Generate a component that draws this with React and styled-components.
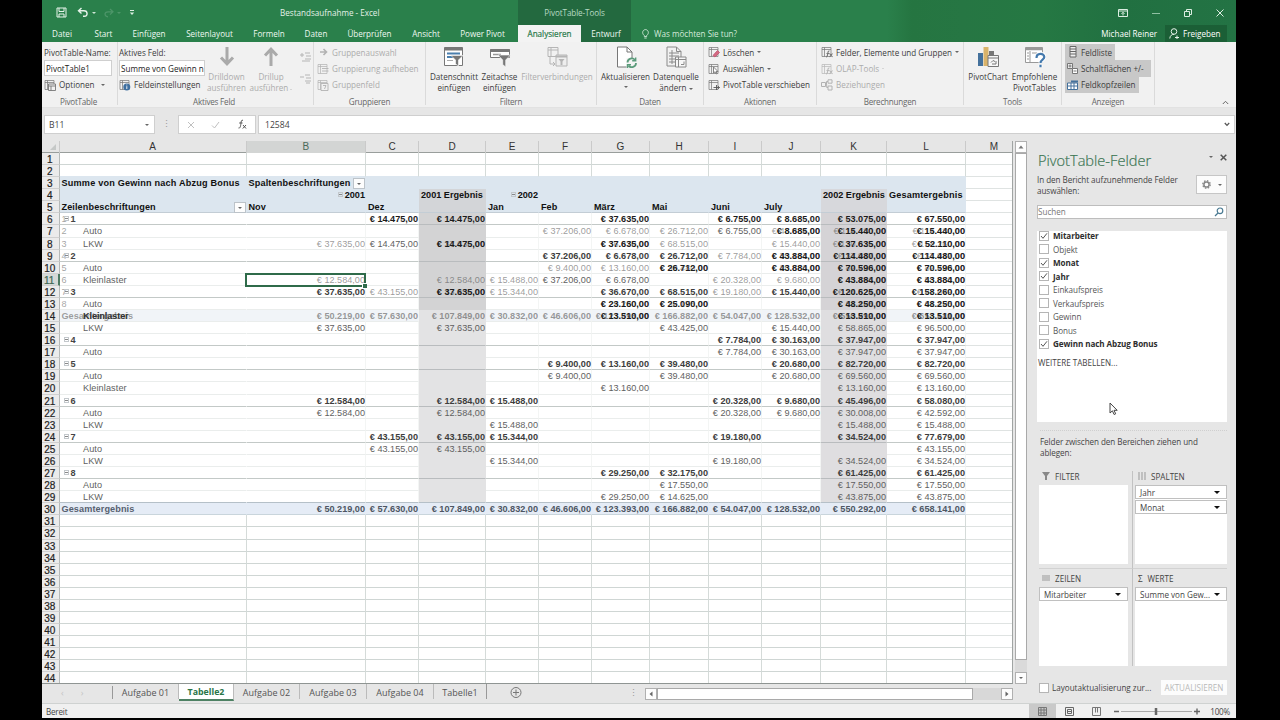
import React from 'react'
import styled, { createGlobalStyle, css } from 'styled-components'

const COLS = ['A', 'B', 'C', 'D', 'E', 'F', 'G', 'H', 'I', 'J', 'K', 'L', 'M']
const ROW_H = 12.09

// pivot after expanding the rows
const expanded = {
  6: 'C14.475 D14.475 G37.635 I6.755 J8.685 K53.075 L67.550',
  7: 'I6.755 J8.685 K15.440 L15.440',
  8: 'C14.475 D14.475 G37.635 K37.635 L52.110',
  9: 'F37.206 G6.678 H26.712 J43.884 K114.480 L114.480',
  10: 'H26.712 J43.884 K70.596 L70.596',
  11: 'F37.206 G6.678 K43.884 L43.884',
  12: 'B37.635 D37.635 G36.670 H68.515 J15.440 K120.625 L158.260',
  13: 'G23.160 H25.090 K48.250 L48.250',
  14: 'G13.510 K13.510 L13.510',
  15: 'B37.635 D37.635 H43.425 J15.440 K58.865 L96.500',
  16: 'I7.784 J30.163 K37.947 L37.947',
  17: 'I7.784 J30.163 K37.947 L37.947',
  18: 'F9.400 G13.160 H39.480 J20.680 K82.720 L82.720',
  19: 'F9.400 H39.480 J20.680 K69.560 L69.560',
  20: 'G13.160 K13.160 L13.160',
  21: 'B12.584 D12.584 E15.488 I20.328 J9.680 K45.496 L58.080',
  22: 'B12.584 D12.584 I20.328 J9.680 K30.008 L42.592',
  23: 'E15.488 K15.488 L15.488',
  24: 'C43.155 D43.155 E15.344 I19.180 K34.524 L77.679',
  25: 'C43.155 D43.155 L43.155',
  26: 'E15.344 I19.180 K34.524 L34.524',
  27: 'G29.250 H32.175 K61.425 L61.425',
  28: 'H17.550 K17.550 L17.550',
  29: 'G29.250 H14.625 K43.875 L43.875',
  30: 'B50.219 C57.630 D107.849 E30.832 F46.606 G123.393 H166.882 I54.047 J128.532 K550.292 L658.141',
}

// collapsed pivot, still fading out underneath
const collapsed = {
  7: 'F37.206 G6.678 H26.712 J43.884 K114.480 L114.480',
  8: 'B37.635 D37.635 G36.670 H68.515 J15.440 K120.625 L158.260',
  9: 'I7.784 J30.163 K37.947 L37.947',
  10: 'F9.400 G13.160 H39.480 J20.680 K82.720 L82.720',
  11: 'B12.584 D12.584 E15.488 I20.328 J9.680 K45.496 L58.080',
  12: 'C43.155 D43.155 E15.344 I19.180 K34.524 L77.679',
  13: 'G29.250 H32.175 K61.425 L61.425',
  14: 'B50.219 C57.630 D107.849 E30.832 F46.606 G123.393 H166.882 I54.047 J128.532 K550.292 L658.141',
}

const labels = {
  7: 'Auto', 8: 'LKW', 10: 'Auto', 11: 'Kleinlaster', 13: 'Auto', 14: 'Kleinlaster', 15: 'LKW',
  17: 'Auto', 19: 'Auto', 20: 'Kleinlaster', 22: 'Auto', 23: 'LKW', 25: 'Auto', 26: 'LKW', 28: 'Auto', 29: 'LKW',
}
const groups = { 6: 1, 9: 2, 12: 3, 16: 4, 18: 5, 21: 6, 24: 7, 27: 8 }
const oldLabels = { 6: '1', 7: '2', 8: '3', 9: '4', 10: '5', 11: '6', 12: '7', 13: '8', 14: 'Gesamtergebnis' }
const months = { B: 'Nov', C: 'Dez', E: 'Jan', F: 'Feb', G: 'März', H: 'Mai', I: 'Juni', J: 'July' }

const lookup = (table, row, col) => {
  const hit = (table[row] || '').split(' ').find((v) => v[0] === col)
  return hit ? `€ ${hit.slice(1)},00` : null
}

const GlobalStyle = createGlobalStyle`
  * { box-sizing: border-box; }
  body {
    margin: 0;
    background: #000;
    overflow: hidden;
    font-family: 'Open Sans', 'Noto Sans', sans-serif;
    font-size: 8.1px;
    color: #444;
  }
  svg { display: block; flex: none; }
`

const Screen = styled.div`
  width: 1280px;
  height: 720px;
  background: #000;
  padding: 0 44px 2px 42px;
`
const Window = styled.div`
  position: relative;
  width: 1194px;
  height: 718px;
  background: #e6e6e6;
  display: flex;
  flex-direction: column;
  overflow: hidden;
  white-space: nowrap;
`

/* title bar + tabs */
const Header = styled.header`
  height: 42px;
  flex: none;
  color: #fff;
  background: linear-gradient(90deg, #2a804b 0, #2a804b 845px, #257541 870px, #267643 920px, #257843 1000px, #217041 1080px, #237344 100%);
  display: flex;
  flex-direction: column;
`
const TitleBar = styled.div`
  height: 25px;
  display: flex;
  align-items: center;
`
const QuickAccess = styled.div`
  width: 238px;
  height: 23px;
  padding-left: 14px;
  display: flex;
  align-items: center;
`
const DocTitle = styled.div`
  width: 238px;
  font-size: 8.1px;
  color: #e4f1e8;
`
const ContextTitle = styled.div`
  width: 113px;
  height: 25px;
  background: #23693f;
  color: #b7d9c3;
  font-size: 8.1px;
  letter-spacing: -0.1px;
  text-align: center;
  line-height: 26px;
`
const WindowButtons = styled.div`
  margin-left: auto;
  height: 21px;
  display: flex;
  align-items: center;
  gap: 24px;
  padding-right: 12px;
`
const TabStrip = styled.nav`
  height: 17px;
  display: flex;
`
const Tab = styled.div`
  width: ${(p) => p.$w}px;
  margin-left: ${(p) => p.$gap || 0}px;
  text-align: center;
  line-height: 17px;
  color: ${(p) => (p.$active ? '#2a7a4a' : '#eef8f1')};
  background: ${(p) => (p.$active ? '#f3f3f3' : p.$context ? '#23693f' : 'transparent')};
  ${(p) => p.$active && '-webkit-text-stroke: 0.2px #2a7a4a;'}
`
const TellMe = styled.div`
  display: flex;
  align-items: center;
  gap: 5px;
  padding-left: 11px;
  color: #d5eadb;
`
const UserName = styled.div`
  margin-left: auto;
  line-height: 17px;
`
const Share = styled.div`
  width: 62px;
  margin: 0 9px 0 8px;
  background: #1b5f36;
  display: flex;
  align-items: center;
  gap: 4px;
  padding-left: 4px;
`

/* ribbon */
const Ribbon = styled.div`
  height: 66px;
  flex: none;
  background: #f1f1f1;
  border-bottom: 1px solid #e2e2e2;
  display: flex;
`
const Group = styled.section`
  width: ${(p) => p.$w}px;
  height: 63px;
  border-right: 1px solid #dadada;
  display: flex;
  flex-direction: column;
`
const GroupBody = styled.div`
  height: 52px;
  flex: none;
  padding-left: ${(p) => p.$pad || 0}px;
  display: flex;
`
const GroupName = styled.div`
  text-align: center;
  line-height: 15px;
  height: 11px;
  font-size: 8.1px;
  letter-spacing: -0.22px;
  color: #666;
  padding-right: ${(p) => p.$shift || 0}px;
`
const Stack = styled.div`
  width: ${(p) => (p.$w ? `${p.$w}px` : 'auto')};
  padding-top: 2px;
  display: flex;
  flex-direction: column;
  align-items: flex-start;
`
const Line = styled.div`
  height: 16.4px;
  display: flex;
  align-items: center;
  gap: 3px;
  color: ${(p) => (p.$off ? '#acacac' : '#3c3c3c')};
  ${(p) => p.$on && css`
    width: ${p.$on}px;
    background: #c8c8c8;
    padding-left: 4px;
  `}
`
const RibbonInput = styled.div`
  width: ${(p) => p.$w}px;
  height: 16px;
  border: 1px solid #cfcfcf;
  background: #fff;
  color: #222;
  line-height: 15px;
  padding-left: 1px;
  overflow: hidden;
`
const BigButton = styled.div`
  width: ${(p) => p.$w}px;
  padding-top: 4px;
  display: flex;
  flex-direction: column;
  align-items: center;
  text-align: center;
  line-height: 11.3px;
  color: ${(p) => (p.$off ? '#acacac' : '#3c3c3c')};
  & > svg { margin-bottom: 3px; }
`
const Caret = styled.i`
  display: inline-block;
  vertical-align: middle;
  margin-left: ${(p) => p.$ml || 0}px;
  border: ${(p) => p.$s || 2}px solid transparent;
  border-top-color: ${(p) => p.$c || '#666'};
  border-bottom: 0;
`
const Collapse = styled.div`
  margin: auto 7px 2px auto;
`

/* formula bar */
const FormulaBar = styled.div`
  height: 33px;
  flex: none;
  padding: 7px 1px 7px 2px;
  display: flex;
  font-size: 8.6px;
`
const NameBox = styled.div`
  width: 111px;
  height: 19px;
  background: #fff;
  border: 1px solid #cfcfcf;
  padding: 0 5px 0 4px;
  display: flex;
  align-items: center;
  justify-content: space-between;
`
const Grip = styled.div`
  width: ${(p) => p.$w}px;
  color: #999;
  text-align: center;
  line-height: 18px;
`
const FxBox = styled.div`
  width: 78px;
  height: 19px;
  background: #fff;
  border: 1px solid #cfcfcf;
  display: flex;
  align-items: center;
  justify-content: space-around;
`
const Formula = styled.div`
  flex: 1;
  margin-left: 2px;
  height: 19px;
  background: #fff;
  border: 1px solid #cfcfcf;
  padding: 0 4px 0 6px;
  display: flex;
  align-items: center;
  justify-content: space-between;
`

/* sheet */
const Main = styled.div`
  display: flex;
  height: 562px;
  flex: none;
`
const SheetSide = styled.div`
  width: 988px;
  display: flex;
  flex-direction: column;
`
const SheetArea = styled.div`
  display: flex;
  height: 543px;
`
const Sheet = styled.div`
  width: 971px;
  height: 543px;
  overflow: hidden;
  border-right: 1px solid #a0a4a3;
  border-bottom: 1px solid #8f9593;
  font-family: 'Liberation Sans', Arial, sans-serif;
  font-size: 9.15px;
`
const gridCols = '17.5px 187px 119.5px 53px 67px 53px 53px 58px 59px 53px 59px 66px 79px 57px'
const HeadRow = styled.div`
  display: grid;
  grid-template-columns: ${gridCols};
  height: 12px;
  border-bottom: 1px solid #999e9c;
`
const ColHead = styled.div`
  text-align: center;
  font-size: 10px;
  line-height: 12px;
  color: #333;
  border-right: 1px solid #cacaca;
  background: ${(p) => (p.$sel ? '#d3d5d4' : 'transparent')};
  ${(p) => p.$sel && 'box-shadow: 0 1px 0 #4c7a62; color: #4c6a5a;'}
`
const Row = styled.div`
  display: grid;
  grid-template-columns: ${gridCols};
  grid-template-rows: ${ROW_H}px;
  height: ${ROW_H}px;
`
const RowHead = styled.div`
  font-size: 10px;
  line-height: 13px;
  text-align: center;
  padding-right: 1px;
  color: #222;
  -webkit-text-stroke: 0.2px #222;
  border-right: 1px solid #b5b9b8;
  border-bottom: 1px solid #d0d0d0;
  background: ${(p) => (p.$sel ? '#d5d9d7' : '#ebebeb')};
  ${(p) => p.$sel && 'border-right: 2px solid #4c7a62; color: #3d6651; -webkit-text-stroke-color: #3d6651;'}
`
const Cell = styled.div`
  position: relative;
  min-width: 0;
  min-height: 0;
  display: grid;
  grid-template-rows: 11px;
  background: ${(p) => p.$bg};
  border-right: 1px solid ${(p) => p.$v};
  border-bottom: 1px solid ${(p) => p.$h};
  line-height: 13px;
  color: #111;
`
const Value = styled.span`
  grid-area: 1 / 1;
  padding-left: 2px;
  justify-self: ${(p) => (p.$left ? 'start' : 'end')};
  margin-left: ${(p) => p.$indent || 0}px;
  font-weight: ${(p) => (p.$bold ? 700 : 400)};
  color: ${(p) => p.$c || '#111'};
  letter-spacing: ${(p) => p.$ls || 0}px;
  white-space: pre;
`
const Expander = styled.span`
  display: inline-block;
  width: 5px;
  height: 5px;
  margin-right: 2px;
  vertical-align: 1px;
  border: 1px solid #c3c8cc;
  background: linear-gradient(#888, #888) center / 3px 1px no-repeat;
`
const FilterButton = styled.span`
  position: absolute;
  right: 0;
  top: 1px;
  width: 12px;
  height: 11px;
  background: #fdfdfd;
  border: 1px solid #bcc3c9;
  display: flex;
  align-items: center;
  justify-content: center;
`
const Selection = styled.span`
  position: absolute;
  inset: -1px -1px -2px -2px;
  border: 2px solid #2f6b4a;
  z-index: 2;
  &::after {
    content: '';
    position: absolute;
    right: -3px;
    bottom: -3px;
    width: 4px;
    height: 4px;
    background: #2f6b4a;
    border: solid #fff;
    border-width: 1px 0 0 1px;
  }
`

const VScroll = styled.div`
  width: 12px;
  margin-left: 2px;
  display: flex;
  flex-direction: column;
  background: #dadada;
`
const HScroll = styled.div`
  width: 368px;
  height: 12px;
  margin: 4px 0 0 5px;
  display: flex;
  background: #d8d8d8;
`
const ScrollButton = styled.div`
  width: 12px;
  height: 12px;
  flex: none;
  background: #fdfdfd;
  border: 1px solid #b0b0b0;
  display: flex;
  align-items: center;
  justify-content: center;
`
const Thumb = styled.div`
  flex: none;
  width: ${(p) => p.$w}px;
  height: ${(p) => p.$h}px;
  background: #fff;
  border: 1px solid #a9a9a9;
`
const SheetTabs = styled.div`
  height: 19px;
  display: flex;
  font-size: 9px;
`
const TabNav = styled.div`
  width: 70px;
  color: #c4c4c4;
  display: flex;
  gap: 17px;
  padding-left: 19px;
  line-height: 17px;
`
const SheetTab = styled.div`
  width: ${(p) => p.$w}px;
  height: ${(p) => (p.$active ? 17 : 15)}px;
  text-align: center;
  line-height: ${(p) => (p.$active ? 17 : 18)}px;
  color: ${(p) => (p.$active ? '#2a7548' : '#555')};
  font-weight: ${(p) => (p.$active ? 700 : 400)};
  background: ${(p) => (p.$active ? '#fff' : 'transparent')};
  font-size: ${(p) => (p.$active ? 8.8 : 9)}px;
  border-right: 1px solid ${(p) => (p.$last ? '#999' : '#bbb')};
  ${(p) => p.$active && 'border-bottom: 2px solid #4d8163;'}
`
const AddTab = styled.div`
  width: 67px;
  padding: 2px 0 0 23px;
`

/* field pane */
const Pane = styled.aside`
  width: 206px;
  padding: 7px 9px 0 8px;
  display: flex;
  flex-direction: column;
`
const PaneTitle = styled.div`
  height: 24px;
  display: flex;
  align-items: center;
  font-size: 14.6px;
  font-weight: 300;
  color: #3b7553;
  -webkit-text-stroke: 0.2px #3b7553;
  & > span { flex: 1; }
`
const PaneHint = styled.div`
  height: 33px;
  padding-top: 3px;
  margin-left: -1px;
  display: flex;
  justify-content: space-between;
  line-height: 10.6px;
  letter-spacing: -0.05px;
  white-space: pre-line;
`
const GearButton = styled.div`
  width: 31px;
  height: 19px;
  background: #fcfcfc;
  border: 1px solid #c6c6c6;
  display: flex;
  align-items: center;
  justify-content: center;
  gap: 7px;
`
const Search = styled.div`
  height: 14px;
  margin-left: -1px;
  background: #fff;
  border: 1px solid #bdbdbd;
  color: #777;
  padding: 0 2px 0 0;
  line-height: 10px;
  display: flex;
  align-items: center;
  justify-content: space-between;
`
const FieldList = styled.div`
  position: relative;
  height: 191px;
  margin: 12px 0 0 -1px;
  background: #fff;
`
const Fields = styled.div`
  margin-top: -2px;
`
const Field = styled.div`
  height: 13.5px;
  padding-left: 2px;
  display: flex;
  align-items: center;
  gap: 4px;
  font-weight: ${(p) => (p.$on ? 700 : 400)};
  color: ${(p) => (p.$on ? '#2e2e2e' : '#555')};
  letter-spacing: ${(p) => (p.$on ? -0.08 : -0.05)}px;
`
const Box = styled.span`
  width: 10px;
  height: 10px;
  flex: none;
  border: 1px solid #b5b5b5;
  background: #fff;
  display: flex;
  align-items: center;
  justify-content: center;
`
const MoreTables = styled.div`
  margin: 6px 0 0 1px;
  line-height: 12px;
`
const Cursor = styled.div`
  position: absolute;
  left: 72px;
  top: 171px;
`
const DragHint = styled.div`
  margin: 8px 0 0 2px;
  border-top: 1px dotted #cfcfcf;
  padding-top: 6px;
  height: 41px;
  line-height: 10.8px;
  letter-spacing: -0.07px;
  white-space: pre-line;
`
const Areas = styled.div`
  margin-left: 1px;
  display: grid;
  grid-template-columns: 93px 95px;
`
const Area = styled.div`
  height: ${(p) => (p.$second ? 97 : 98)}px;
  ${(p) => p.$right && 'border-left: 1px solid #c2c2c2; padding-left: 2px;'}
  ${(p) => !p.$second && 'border-bottom: 1px solid #d2d2d2;'}
`
const AreaName = styled.div`
  height: ${(p) => (p.$second ? 18 : 14)}px;
  padding-bottom: ${(p) => (p.$second ? 0 : 4)}px;
  display: flex;
  align-items: center;
  gap: 5px;
  padding-left: 3px;
`
const AreaBox = styled.div`
  width: ${(p) => (p.$right ? 92 : 89)}px;
  height: 79px;
  background: #fff;
`
const Chip = styled.div`
  height: 14px;
  margin-bottom: 1px;
  border: 1px solid #c0c0c0;
  display: flex;
  align-items: center;
  justify-content: space-between;
  padding: 0 6px 0 4px;
`
const PaneFooter = styled.div`
  margin-top: auto;
  height: 29px;
  padding: 0 0 2px 1px;
  display: flex;
  align-items: center;
  gap: 3px;
`
const UpdateButton = styled.div`
  width: 66px;
  height: 15px;
  margin-left: auto;
  background: #fcfcfc;
  color: #b9b9b9;
  text-align: center;
  line-height: 15px;
`

/* status bar */
const StatusBar = styled.footer`
  height: 15px;
  flex: none;
  border-top: 1px solid #cfd2d1;
  background: #f0f0f0;
  display: flex;
  align-items: center;
  padding: 0 6px 0 4px;
  letter-spacing: -0.2px;
`
const ViewButton = styled.div`
  width: 27px;
  height: 14px;
  background: ${(p) => (p.$on ? '#c9c9c9' : 'transparent')};
  display: flex;
  align-items: center;
  justify-content: center;
`
const Zoom = styled.div`
  width: 87px;
  margin-left: 4px;
  display: flex;
  align-items: center;
`

/* icons */
const Svg = ({ w = 12, h = 12, c = '#777', sw = 1, children, ...rest }) => (
  <svg width={w} height={h} viewBox={`0 0 ${w} ${h}`} fill="none" stroke={c} strokeWidth={sw} {...rest}>{children}</svg>
)
const Check = () => <Svg w={8} h={8} c="#555"><path d="M1 4l2 2.3L7 1.3" /></Svg>
const TableIcon = ({ c = '#777', kind }) => (
  <Svg w={12} h={12} c={c} sw={0.9}>
    <path d="M1 1.5h9v9h-9zM1 3.5h9M3.5 1.5v9" opacity="0.8" />
    {kind === 'options' && <path d="M4.5 5h7v6.5h-7zM4.5 7h7M7 7v4.5" fill="#f1f1f1" />}
    {kind === 'info' && <><circle cx="7.8" cy="8" r="3.5" fill="#3f6f9f" stroke="none" /><path d="M7.8 7.2v2.8M7.8 5.6v.8" stroke="#fff" /></>}
    {kind === 'erase' && <><path d="M5 9.5l4.5-5 2 2-4.5 4.5z" fill="#d56a83" stroke="#c25a75" /></>}
    {kind === 'select' && <path d="M5.5 4v6l1.5-1.2 1 2.2 1-.5-1-2h2z" fill="#fff" />}
    {kind === 'move' && <path d="M5.5 8.5h6M8.5 6v5M9.8 7l1.7 1.5-1.7 1.5" stroke="#555" />}
    {kind === 'ungroup' && <path d="M5 5.5h6.5M5 8h6.5" />}
    {kind === 'field' && <path d="M4 4.5h7v7h-7zM6 6.5h3l-1.5 3.5" fill="#f1f1f1" />}
    {kind === 'fx' && <path d="M8.5 5c-1.5-.4-1.5 1-1.7 2.5S6.5 11 5 11M5.5 7.5h2.7M8.5 7.5l3 3.5M11.5 7.5l-3 3.5" stroke={c} strokeWidth="1.1" />}
  </Svg>
)
const Relations = () => <Svg c="#b2b2b2"><path d="M.5 3.5h4v4h-4zM7 .8h4v3.4H7zM7 7h4v4H7zM4.5 5.5h1.2v3H7M7 2.5H5.5v3" /></Svg>
const ArrowIcon = ({ up }) => (
  <Svg w={18} h={22} c="#aaa" sw={3}><path d={up ? 'M9 20V4M3 9.5L9 3.2l6 6.3' : 'M9 1v16M3 11.5l6 6.3 6-6.3'} /></Svg>
)
const Slicer = () => (
  <Svg w={22} h={22} c="#777">
    <path d="M1.5 1.5h18v18h-18z" fill="#fff" /><path d="M1.5 3h18" strokeWidth="3" />
    <path d="M4 7.5h13M4 11h8" stroke="#4a7fae" strokeWidth="2" /><path d="M4 14.5h6" stroke="#aaa" />
    <path d="M8 9.5h12l-4.5 4.5v6l-3-2v-4z" fill="#777" stroke="#fff" strokeWidth=".6" />
  </Svg>
)
const Timeline = () => (
  <Svg w={22} h={22} c="#777">
    <path d="M1.5 3.5h19v8h-19z" fill="#fff" /><path d="M1.5 4.5h19" strokeWidth="3" /><path d="M4 8.5h8" stroke="#999" strokeWidth="1.5" />
    <path d="M9 9h12.5l-4.8 5v7l-3-2.5V14z" fill="#777" stroke="#fff" strokeWidth=".6" />
  </Svg>
)
const FilterLink = () => (
  <Svg w={22} h={22} c="#b5b5b5">
    <path d="M2 1.5h10v9H2zM2 4h10M5 1.5v9M4 11v7h5M7 16l2 2-2 2" /><path d="M10 9h11v11H10z" fill="#eee" /><path d="M10 10.5h11" strokeWidth="2" />
    <path d="M12.5 13h6l-2 2.5V19h-2v-3.5z" fill="#b5b5b5" stroke="none" />
  </Svg>
)
const Refresh = () => (
  <Svg w={22} h={22} c="#777">
    <path d="M2.5 1h9.5l5 5v15h-14.5z" fill="#fff" /><path d="M12 1v5h5" />
    <path d="M11.5 12h10v10h-10z" fill="#f4f4f4" stroke="none" />
    <path d="M12.5 16.5a4.2 4.2 0 017.500-2.500M21 17a4.200 4.200 0 01-7.500 2.600" stroke="#5b9b7b" strokeWidth="1.8" />
    <path d="M20.700 11.500v3.300h-3.500M12.500 22v-3.300h3.500" stroke="#5b9b7b" strokeWidth="1.4" />
  </Svg>
)
const DataSource = () => (
  <Svg w={22} h={22} c="#8a8a8a">
    <path d="M2 1h9.500l4.500 4.500V20H2zM11.500 1v4.500H16M4 7h10M4 10h10M4 13h6M4 16h6M7 4v14" />
    <path d="M10.500 11h10.500v10H10.500z" fill="#f7f7f7" /><path d="M10.500 13.500H21M13.500 11v10M16 18.500h3v-3" />
  </Svg>
)
const PivotChart = () => (
  <Svg w={22} h={22} c="#777">
    <path d="M1 7h5v13H1z" fill="#44719c" stroke="none" /><path d="M6.500 1h5v19h-5z" fill="#d9b36a" stroke="none" /><path d="M12 5h5v6h-5z" fill="#777" stroke="none" />
    <path d="M11 9.500h10.500v11H11z" fill="#f7f7f7" /><path d="M11 12h10.500M14 16.500l2-2 2 1M15 18h4v-3" />
  </Svg>
)
const Recommended = () => (
  <Svg w={22} h={22} c="#999">
    <path d="M1.500 1.500h17v15h-17z" fill="#fff" /><path d="M1.500 3h17" strokeWidth="2.500" /><path d="M6 5v11M3 7h2M3 10h2M3 13h2M8 7h5" />
    <path d="M12.500 12c0-5.500 7.800-5 7.800-1 0 2.700-3.800 2.500-3.800 6M16.500 18.800v2.400" stroke="#fff" strokeWidth="4" />
    <path d="M12.500 12c0-5.500 7.800-5 7.800-1 0 2.700-3.800 2.500-3.800 6M16.500 18.800v2.400" stroke="#4479ad" strokeWidth="2.200" />
  </Svg>
)

const rowKind = (r) => {
  if (r >= 3 && r <= 5) return 'head'
  if (r >= 6 && r <= 29) return 'data'
  if (r === 30) return 'total'
  return 'blank'
}

const cellColors = (r, c) => {
  const kind = rowKind(r)
  if (c === 'M') return { $bg: '#fff', $v: 'transparent', $h: '#dfe3e2' }
  if (kind === 'blank') return { $bg: '#fff', $v: '#d5dbd9', $h: r === 2 ? '#dce6ef' : '#cfd6d4' }
  if (kind === 'head') {
    const bg = r > 3 && c === 'D' ? '#d3d5d8' : r > 3 && c === 'K' ? '#d7d8dc' : '#dce6ef'
    return { $bg: bg, $v: bg, $h: r === 5 ? '#c3cdd5' : bg }
  }
  if (kind === 'total') return { $bg: '#e5ecf6', $v: '#e5ecf6', $h: '#c9d5dc' }
  let bg = r === 14 ? '#f1f4f8' : '#fff'
  if (c === 'D') bg = r < 14 ? '#d3d3d4' : '#e3e3e4'
  if (c === 'K') bg = r < 14 ? '#d5d3d6' : '#dfdee0'
  const shaded = c === 'D' || c === 'K'
  let h = shaded ? bg : '#eaedec'
  if (groups[r]) h = shaded ? '#b9bcbe' : '#c3c9c7'
  if (r === 29) h = '#b5c0c8'
  return { $bg: bg, $v: shaded || c === 'A' ? bg : '#f3f5f4', $h: h }
}

const SheetCell = ({ r, c }) => {
  const now = lookup(expanded, r, c)
  const old = lookup(collapsed, r, c)
  const bold = !!groups[r] || r === 30
  const strong = r === 6 || (old && now)
  const nowColor = strong ? '#1c1c1c' : r === 30 ? '#4d5663' : bold ? '#3d3d3d' : '#5f5f5f'
  return (
    <Cell {...cellColors(r, c)}>
      {old && <Value $bold={r === 14} $c="rgba(70,70,70,0.55)">{old}</Value>}
      {now && <Value $bold={bold || (strong && r > 6)} $c={nowColor}>{now}</Value>}
      {c === 'A' && r === 3 && <Value $left $bold $ls={0.19}>Summe von Gewinn nach Abzug Bonus</Value>}
      {c === 'A' && r === 5 && <><Value $left $bold $ls={0.1}>Zeilenbeschriftungen</Value><FilterButton><Caret /></FilterButton></>}
      {c === 'B' && r === 3 && <><Value $left $bold $ls={0.15}>Spaltenbeschriftungen</Value><FilterButton><Caret /></FilterButton></>}
      {r === 4 && (c === 'B' || c === 'E') && <Value $bold><Expander />{c === 'B' ? '2001' : '2002'}</Value>}
      {r === 4 && c === 'D' && <Value $left $bold>2001 Ergebnis</Value>}
      {r === 4 && c === 'K' && <Value $left $bold>2002 Ergebnis</Value>}
      {r === 4 && c === 'L' && <Value $left $bold $ls={0.15}>Gesamtergebnis</Value>}
      {r === 5 && months[c] && <Value $left $bold>{months[c]}</Value>}
      {c === 'A' && oldLabels[r] && <Value $left $bold={r === 14} $c="rgba(70,70,70,0.5)">{oldLabels[r]}</Value>}
      {c === 'A' && groups[r] && <Value $left $bold $c="#444" $indent={2}><Expander />{groups[r]}</Value>}
      {c === 'A' && labels[r] && <Value $left $indent={21.5} $bold={r === 14} $c={r === 14 ? '#333' : '#5f5f5f'} $ls={r === 14 ? -0.1 : 0.1}>{labels[r]}</Value>}
      {c === 'A' && r === 30 && <Value $left $bold $c="#56606f" $ls={0.1}>Gesamtergebnis</Value>}
      {c === 'B' && r === 11 && <Selection />}
    </Cell>
  )
}

const fields = [
  ['Mitarbeiter', 1], ['Objekt', 0], ['Monat', 1], ['Jahr', 1], ['Einkaufspreis', 0],
  ['Verkaufspreis', 0], ['Gewinn', 0], ['Bonus', 0], ['Gewinn nach Abzug Bonus', 1],
]
const tabs = [['Datei', 40], ['Start', 43], ['Einfügen', 48], ['Seitenlayout', 73], ['Formeln', 46], ['Daten', 48], ['Überprüfen', 59], ['Ansicht', 54], ['Power Pivot', 59]]

const App = () => {
  const rows = Array.from({ length: 44 }, (_, i) => i + 1)
  return (
    <Screen>
      <GlobalStyle />
      <Window>
        <Header>
          <TitleBar>
            <QuickAccess>
              <Svg w={11} h={11} c="#e6f3ea"><path d="M1 1h9v9H1zM3 1v3.500h5V1M3 10V7h5v3" /></Svg>
              <Svg w={12} h={11} c="#e6f3ea" sw={1.4} style={{ marginLeft: 10 }}><path d="M4.500 1L1.500 3.800l3 2.800M2 3.800h5c4 0 4 5.500.5 5.500H6" /></Svg>
              <Caret $ml={3} $c="#cfe5d6" />
              <Svg w={11} h={10} c="#4d9569" sw={1.2} style={{ marginLeft: 7 }}><path d="M7 1l3 2.800-3 2.800M9.500 3.800H5c-4 0-4 4.500 0 5" /></Svg>
              <Caret $ml={3} $c="#4d9569" />
              <Svg w={6} h={6} c="#dceee2" style={{ marginLeft: 8 }}><path d="M1 .5h4" /><path d="M.8 2.500h4.400L3 5z" fill="#dceee2" stroke="none" /></Svg>
            </QuickAccess>
            <DocTitle>Bestandsaufnahme - Excel</DocTitle>
            <ContextTitle>PivotTable-Tools</ContextTitle>
            <WindowButtons>
              <Svg w={10} h={8} c="#dceee2"><path d="M.5.5h9v7h-9zM.5 2h9M5 6.500V3.500M3.500 4.800L5 3.300l1.500 1.500" /></Svg>
              <Svg w={8} h={8} c="#8fc0a2"><path d="M0 4.500h8" /></Svg>
              <Svg w={8} h={8} c="#dceee2"><path d="M.5 2.500h5v5h-5zM2.500 2V.5h5v5H6" /></Svg>
              <Svg w={8} h={8} c="#dceee2"><path d="M.5.5l7 7M7.500.5l-7 7" /></Svg>
            </WindowButtons>
          </TitleBar>
          <TabStrip>
            {tabs.map(([t, w]) => <Tab key={t} $w={w}>{t}</Tab>)}
            <Tab $w={63} $gap={6} $active>Analysieren</Tab>
            <Tab $w={50} $context>Entwurf</Tab>
            <TellMe>
              <Svg w={7} h={10} c="#d5eadb" sw={0.9}><path d="M2.300 6.500C-.8 4 1 .6 3.500.6S7.800 4 4.700 6.500v1H2.300zM2.300 9h2.400" /></Svg>
              Was möchten Sie tun?
            </TellMe>
            <UserName>Michael Reiner</UserName>
            <Share>
              <Svg w={10} h={11} c="#e6f3ea"><circle cx="5" cy="3.500" r="2.800" /><path d="M.8 10.500C1 7.500 3 6.300 5 6.300M6 9.500h4M8 7.500v3.500" /></Svg>
              Freigeben
            </Share>
          </TabStrip>
        </Header>

        <Ribbon>
          <Group $w={76}>
            <GroupBody $pad={2}>
              <Stack>
                <Line>PivotTable-Name:</Line>
                <RibbonInput $w={68}>PivotTable1</RibbonInput>
                <Line><TableIcon kind="options" />Optionen <Caret $ml={3} /></Line>
              </Stack>
            </GroupBody>
            <GroupName $shift={2}>PivotTable</GroupName>
          </Group>
          <Group $w={196}>
            <GroupBody $pad={1}>
              <Stack $w={86}>
                <Line>Aktives Feld:</Line>
                <RibbonInput $w={86}>Summe von Gewinn n</RibbonInput>
                <Line><TableIcon kind="info" />Feldeinstellungen</Line>
              </Stack>
              <BigButton $w={43} $off><ArrowIcon />Drilldown<br />ausführen</BigButton>
              <BigButton $w={46} $off><ArrowIcon up /><span>Drillup<br />ausführen <Caret $c="#bbb" $s={1.5} /></span></BigButton>
              <Stack>
                <Svg w={11} h={10} c="#b5b5b5" style={{ margin: '8px 0 0 6px' }}><path d="M0 3h4M2 1v4M5 1h5M6 4h5M5 7h6M2 9h8" /></Svg>
                <Svg w={11} h={10} c="#b5b5b5" style={{ margin: '12px 0 0 6px' }}><path d="M0 3h4M5 1h5M6 4h5M5 7h6M6 9h4" /></Svg>
              </Stack>
            </GroupBody>
            <GroupName $shift={3}>Aktives Feld</GroupName>
          </Group>
          <Group $w={112}>
            <GroupBody $pad={3}>
              <Stack>
                <Line $off><Svg c="#b2b2b2" sw={1.6}><path d="M3 6h6M6.500 3l3 3-3 3" /></Svg>Gruppenauswahl</Line>
                <Line $off><TableIcon c="#b2b2b2" kind="ungroup" />Gruppierung aufheben</Line>
                <Line $off><TableIcon c="#b2b2b2" kind="field" />Gruppenfeld</Line>
              </Stack>
            </GroupBody>
            <GroupName>Gruppieren</GroupName>
          </Group>
          <Group $w={171}>
            <GroupBody $pad={3}>
              <BigButton $w={50}><Slicer />Datenschnitt<br />einfügen</BigButton>
              <BigButton $w={41}><Timeline />Zeitachse<br />einfügen</BigButton>
              <BigButton $w={74} $off><FilterLink />Filterverbindungen</BigButton>
            </GroupBody>
            <GroupName>Filtern</GroupName>
          </Group>
          <Group $w={107}>
            <GroupBody $pad={3}>
              <BigButton $w={51}><Refresh />Aktualisieren<Caret $s={2} style={{ marginTop: 4 }} /></BigButton>
              <BigButton $w={50}><DataSource /><span>Datenquelle<br />ändern <Caret /></span></BigButton>
            </GroupBody>
            <GroupName>Daten</GroupName>
          </Group>
          <Group $w={113}>
            <GroupBody $pad={4}>
              <Stack>
                <Line><TableIcon kind="erase" />Löschen <Caret /></Line>
                <Line><TableIcon kind="select" />Auswählen <Caret /></Line>
                <Line><TableIcon kind="move" />PivotTable verschieben</Line>
              </Stack>
            </GroupBody>
            <GroupName>Aktionen</GroupName>
          </Group>
          <Group $w={147}>
            <GroupBody $pad={4}>
              <Stack>
                <Line><TableIcon kind="fx" />Felder, Elemente und Gruppen <Caret /></Line>
                <Line $off><TableIcon c="#b8b8b8" kind="fx" />OLAP-Tools <Caret $s={1.5} $c="#bbb" /></Line>
                <Line $off><Relations />Beziehungen</Line>
              </Stack>
            </GroupBody>
            <GroupName>Berechnungen</GroupName>
          </Group>
          <Group $w={98}>
            <GroupBody $pad={2}>
              <BigButton $w={44}><PivotChart />PivotChart</BigButton>
              <BigButton $w={49}><Recommended />Empfohlene<br />PivotTables</BigButton>
            </GroupBody>
            <GroupName>Tools</GroupName>
          </Group>
          <Group $w={93}>
            <GroupBody $pad={3}>
              <Stack>
                <Line $on={50}><Svg w={9} h={12} c="#666"><path d="M1 .5h6v10.500H1zM1 3h6M1 5.500h6M1 8h6" fill="#eee" /></Svg>Feldliste</Line>
                <Line $on={86}><Svg w={11} h={12} c="#777" style={{ marginLeft: -2 }}><path d="M.5.5h5v5h-5zM3 1.500v3M1.500 3h3" fill="#eee" /><path d="M5.500 5.500h5v5h-5zM6.500 8h3" fill="#fff" /></Svg>Schaltflächen +/-</Line>
                <Line $on={74}><Svg w={11} h={10} c="#44719c" style={{ marginLeft: -2 }}><path d="M.5 3h10v6.500H.5zM.5 6h10M4 3v6.500M7 3v6.500" fill="#fff" /><path d="M4 1.500h7" strokeWidth="2" /></Svg>Feldkopfzeilen</Line>
              </Stack>
            </GroupBody>
            <GroupName>Anzeigen</GroupName>
          </Group>
          <Collapse><Svg w={7} h={5} c="#666"><path d="M.8 4l2.700-2.700L6.200 4" /></Svg></Collapse>
        </Ribbon>

        <FormulaBar>
          <NameBox>B11<Caret $s={2.5} /></NameBox>
          <Grip $w={23}>⋮</Grip>
          <FxBox>
            <Svg w={8} h={8} c="#c0c0c0"><path d="M1 1l6 6M7 1L1 7" /></Svg>
            <Svg w={9} h={8} c="#c0c0c0"><path d="M1 4.500L3.500 7 8 1" /></Svg>
            <Svg w={10} h={11} c="#555"><path d="M6 1.300C4.300.8 4.200 2 3.900 4.500S3.300 9.500 1.500 9M2.200 4h3.300M6 6l3 3.500M9 6L5.800 9.500" /></Svg>
          </FxBox>
          <Formula>12584<Svg w={6} h={5} c="#555" sw={1.3}><path d="M.8 1L3 3.400 5.200 1" /></Svg></Formula>
        </FormulaBar>

        <Main>
          <SheetSide>
            <SheetArea>
              <Sheet>
                <HeadRow>
                  <ColHead><Svg w={16} h={11} stroke="none"><path d="M14 3v6H8z" fill="#c5c8c7" /></Svg></ColHead>
                  {COLS.map((c) => <ColHead key={c} $sel={c === 'B'}>{c}</ColHead>)}
                </HeadRow>
                {rows.map((r) => (
                  <Row key={r}>
                    <RowHead $sel={r === 11}>{r}</RowHead>
                    {COLS.map((c) => <SheetCell key={c} r={r} c={c} />)}
                  </Row>
                ))}
              </Sheet>
              <VScroll>
                <ScrollButton><Svg w={6} h={4} stroke="none"><path d="M.5 3.500h5L3 .5z" fill="#777" /></Svg></ScrollButton>
                <Thumb $w={12} $h={507} />
                <ScrollButton style={{ marginTop: 'auto' }}><Caret $s={2.5} /></ScrollButton>
              </VScroll>
            </SheetArea>
            <SheetTabs>
              <TabNav><span>‹</span><span>›</span></TabNav>
              <SheetTab $w={2} style={{ borderRight: '1px solid #999', marginTop: 2, height: 13, marginLeft: -1 }} />
              <SheetTab $w={66}>Aufgabe 01</SheetTab>
              <SheetTab $w={55} $active>Tabelle2</SheetTab>
              <SheetTab $w={66}>Aufgabe 02</SheetTab>
              <SheetTab $w={67}>Aufgabe 03</SheetTab>
              <SheetTab $w={67}>Aufgabe 04</SheetTab>
              <SheetTab $w={53} $last>Tabelle1</SheetTab>
              <AddTab><Svg w={12} h={13} c="#777"><circle cx="6" cy="6.500" r="5" /><path d="M6 3.500v6M3 6.500h6" /></Svg></AddTab>
              <Grip $w={13} style={{ marginLeft: 'auto' }}>⋮</Grip>
              <HScroll>
                <ScrollButton><Svg w={4} h={6} stroke="none"><path d="M3.500.5v5L.5 3z" fill="#666" /></Svg></ScrollButton>
                <Thumb $w={316} $h={12} />
                <ScrollButton style={{ marginLeft: 'auto' }}><Svg w={4} h={6} stroke="none"><path d="M.5.5v5L3.500 3z" fill="#666" /></Svg></ScrollButton>
              </HScroll>
              <Grip $w={17} />
            </SheetTabs>
          </SheetSide>

          <Pane>
            <PaneTitle>
              <span>PivotTable-Felder</span>
              <Caret $s={2.5} style={{ marginTop: -6 }} />
              <Svg w={7} h={7} c="#555" sw={1.5} style={{ margin: '-6px 0 0 7px' }}><path d="M.7.7l5.600 5.600M6.300.7L.7 6.300" /></Svg>
            </PaneTitle>
            <PaneHint>
              {'In den Bericht aufzunehmende Felder\nauswählen:'}
              <GearButton><Svg w={9} h={9} c="#888"><circle cx="4.500" cy="4.500" r="2.600" strokeWidth="1.500" /><circle cx="4.500" cy="4.500" r="3.700" strokeWidth="1.400" strokeDasharray="1.500 1.400" /></Svg><Caret $s={2.5} /></GearButton>
            </PaneHint>
            <Search>Suchen<Svg w={10} h={10} c="#4a7a92" sw={1.2}><circle cx="6" cy="3.800" r="2.800" /><path d="M4 6L1 9" /></Svg></Search>
            <FieldList>
              <Fields>
                {fields.map(([name, on]) => <Field key={name} $on={on}><Box>{on ? <Check /> : null}</Box>{name}</Field>)}
              </Fields>
              <MoreTables>WEITERE TABELLEN...</MoreTables>
              <Cursor><Svg w={9} h={14} c="#444"><path d="M1 1v10l2.400-2.200 1.700 3.700 1.600-.7L5 8.300h3.200z" fill="#fff" /></Svg></Cursor>
            </FieldList>
            <DragHint>{'Felder zwischen den Bereichen ziehen und\nablegen:'}</DragHint>
            <Areas>
              <Area>
                <AreaName><Svg w={8} h={8} stroke="none"><path d="M0 0h8L5 4v4H3V4z" fill="#888" /></Svg>FILTER</AreaName>
                <AreaBox />
              </Area>
              <Area $right>
                <AreaName><Svg w={8} h={8} c="#999"><path d="M1 0v8M4 0v8M7 0v8" /></Svg>SPALTEN</AreaName>
                <AreaBox $right>
                  <Chip>Jahr<Caret $s={3} $c="#111" /></Chip>
                  <Chip>Monat<Caret $s={3} $c="#111" /></Chip>
                </AreaBox>
              </Area>
              <Area $second>
                <AreaName $second><Svg w={8} h={6} c="#999"><path d="M0 1h8M0 3h8M0 5h8" /></Svg>ZEILEN</AreaName>
                <AreaBox><Chip>Mitarbeiter<Caret $s={3} $c="#111" /></Chip></AreaBox>
              </Area>
              <Area $right $second>
                <AreaName $second><span>Σ</span>WERTE</AreaName>
                <AreaBox $right><Chip>Summe von Gew...<Caret $s={3} $c="#111" /></Chip></AreaBox>
              </Area>
            </Areas>
            <PaneFooter><Box />Layoutaktualisierung zur...<UpdateButton>AKTUALISIEREN</UpdateButton></PaneFooter>
          </Pane>
        </Main>

        <StatusBar>
          <span style={{ flex: 1 }}>Bereit</span>
          <ViewButton $on><Svg w={9} h={9} c="#777"><path d="M.5.5h8v8h-8zM.5 3h8M.5 6h8M3 .5v8M6 .5v8" /></Svg></ViewButton>
          <ViewButton><Svg w={9} h={9} c="#666"><path d="M.5.5h8v8h-8zM2.500 2.500h4v4h-4zM2.500 4.500h4" /></Svg></ViewButton>
          <ViewButton><Svg w={9} h={9} c="#777"><path d="M.5.5h8v8h-8zM3.500.5v5M5.500.5v5" /></Svg></ViewButton>
          <Zoom>
            <Svg w={86} h={9} c="#666"><path d="M0 4.500h5M80 4.500h6M83 1.500v6" strokeWidth="1.400" /><path d="M7 4.500h71" stroke="#aaa" /><path d="M42 1v7" strokeWidth="2.500" /></Svg>
          </Zoom>
          <span style={{ marginLeft: 9 }}>100%</span>
        </StatusBar>
      </Window>
    </Screen>
  )
}

export default App
